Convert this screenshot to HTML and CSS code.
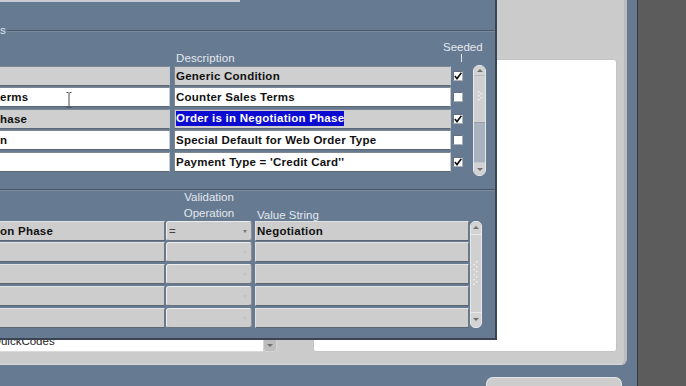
FILE: index.html
```html
<!DOCTYPE html>
<html>
<head>
<meta charset="utf-8">
<link rel="stylesheet" href="styles.css">
</head>
<body>
<div class="desk">
  <div class="bgwin">
    <div class="qc-field">QuickCodes</div>
    <div class="qc-btn"><span class="tri-dn"></span></div>
    <div class="pane"></div>
  </div>
  <div class="darkside"></div>
  <div class="btn-bottom"></div>

  <div class="dialog">
    <div class="topfield"></div>
    <div class="frame-title"><span class="ft-label">s</span><span class="ft-line"></span></div>

    <div class="up-head">
      <div class="hd hd-desc">Description</div>
      <div class="hd hd-seeded"><span>Seeded</span><i class="tick"></i></div>
    </div>

    <div class="up-rows">
      <div class="sb sb-up">
        <div class="sb-a sb-a-top"><span class="tri-up"></span></div>
        <div class="sb-thumb">
          <svg width="6" height="10" viewBox="0 0 6 10"><g fill="#f4f4f4"><rect x="1" y="0" width="1.4" height="1.4"/><rect x="3.6" y="2" width="1.4" height="1.4"/><rect x="1" y="4" width="1.4" height="1.4"/><rect x="3.6" y="6" width="1.4" height="1.4"/><rect x="1" y="8" width="1.4" height="1.4"/></g></svg>
        </div>
        <div class="sb-trk"></div>
        <div class="sb-a sb-a-bot"><span class="tri-dn"></span></div>
      </div>

      <div class="fld f-left gray"></div>
      <div class="fld f-desc gray">Generic Condition</div>
      <div class="cb"><svg width="8" height="8" viewBox="0 0 8 8"><polyline points="0.8,4 3,6.6 7.4,0.8" fill="none" stroke="#111" stroke-width="1.6"/></svg></div>

      <div class="fld f-left white">erms</div>
      <div class="fld f-desc white">Counter Sales Terms</div>
      <div class="cb"></div>

      <div class="fld f-left gray">hase</div>
      <div class="fld f-desc gray"><span class="sel">Order is in Negotiation Phase</span></div>
      <div class="cb"><svg width="8" height="8" viewBox="0 0 8 8"><polyline points="0.8,4 3,6.6 7.4,0.8" fill="none" stroke="#111" stroke-width="1.6"/></svg></div>

      <div class="fld f-left white">n</div>
      <div class="fld f-desc white">Special Default for Web Order Type</div>
      <div class="cb"></div>

      <div class="fld f-left white"></div>
      <div class="fld f-desc white">Payment Type = 'Credit Card''</div>
      <div class="cb"><svg width="8" height="8" viewBox="0 0 8 8"><polyline points="0.8,4 3,6.6 7.4,0.8" fill="none" stroke="#111" stroke-width="1.6"/></svg></div>
    </div>

    <div class="sep"></div>

    <div class="low-head">
      <div class="hd hd-op">Validation<br>Operation</div>
      <div class="hd hd-val">Value String</div>
    </div>

    <div class="low-rows">
      <div class="sb sb-low">
        <div class="sb-a sb-a-top2"><span class="tri-up"></span></div>
        <div class="sb-thumb2">
          <svg width="8" height="24" viewBox="0 0 8 24"><g fill="#f2f2f2"><rect x="4" y="0" width="1.4" height="1.4"/><rect x="1.5" y="3" width="1.4" height="1.4"/><rect x="4" y="5" width="1.4" height="1.4"/><rect x="1.5" y="8" width="1.4" height="1.4"/><rect x="4" y="10" width="1.4" height="1.4"/><rect x="1.5" y="13" width="1.4" height="1.4"/><rect x="4" y="15" width="1.4" height="1.4"/><rect x="1.5" y="18" width="1.4" height="1.4"/><rect x="4" y="20" width="1.4" height="1.4"/><rect x="1.5" y="22.5" width="1.4" height="1.4"/></g></svg>
        </div>
        <div class="sb-a sb-a-bot2"><span class="tri-dn"></span></div>
      </div>

      <div class="fld lf l-left">on Phase</div>
      <div class="fld lf l-op"><span class="eq">=</span><span class="op-arrow dark"></span></div>
      <div class="fld lf l-val">Negotiation</div>

      <div class="fld lf l-left"></div>
      <div class="fld lf l-op"><span class="op-arrow"></span></div>
      <div class="fld lf l-val"></div>

      <div class="fld lf l-left"></div>
      <div class="fld lf l-op"><span class="op-arrow"></span></div>
      <div class="fld lf l-val"></div>

      <div class="fld lf l-left"></div>
      <div class="fld lf l-op"><span class="op-arrow"></span></div>
      <div class="fld lf l-val"></div>

      <div class="fld lf l-left"></div>
      <div class="fld lf l-op"><span class="op-arrow"></span></div>
      <div class="fld lf l-val"></div>
    </div>

    <svg class="ibeam" width="6" height="16" viewBox="0 0 6 16"><path d="M0.5 0.5H2.5M3.5 0.5H5.5M3 1V15M0.5 15.5H2.5M3.5 15.5H5.5" fill="none" stroke="#4a4a4a" stroke-width="1"/></svg>
  </div>
</div>
</body>
</html>
```

FILE: styles.css
```css
html, body {
  margin: 0;
  padding: 0;
}
body {
  width: 686px;
  height: 386px;
  overflow: hidden;
  background: #667a92;
  font-family: "Liberation Sans", Arial, sans-serif;
}
.desk {
  position: relative;
  width: 686px;
  height: 386px;
  overflow: hidden;
}

/* background form window */
.bgwin {
  position: absolute;
  left: -12px;
  top: 0;
  width: 639px;
  height: 365px;
  box-sizing: border-box;
  padding: 60px 0 12px 0;
  display: flex;
  align-items: flex-end;
  background: #cbcbcb;
  border-right: 3px solid #bcbcbc;
  border-bottom: 1px solid #d6d6d6;
  border-bottom-right-radius: 6px;
}
.qc-field {
  width: 275px;
  height: 18px;
  box-sizing: border-box;
  padding-left: 4px;
  background: #fff;
  border-bottom: 1px solid #d9d9d9;
  font-size: 11.5px;
  line-height: 14px;
  color: #222;
}
.qc-btn {
  width: 14px;
  height: 13px;
  box-sizing: border-box;
  background: #bdbdbd;
  border: 1px solid #d4d4d4;
  border-top: 0;
  border-radius: 0 0 4px 4px;
  display: flex;
  align-items: center;
  justify-content: center;
}
.pane {
  width: 304px;
  height: 293px;
  margin-left: 36px;
  box-sizing: border-box;
  background: #fff;
  border: 1px solid #c4c4c4;
  border-radius: 3px;
}
.darkside {
  position: absolute;
  left: 637px;
  top: 0;
  width: 49px;
  height: 386px;
  box-sizing: border-box;
  background: #5c5c5c;
  border-left: 1px solid #3b3b3b;
}
.btn-bottom {
  position: absolute;
  left: 486px;
  top: 377px;
  width: 136px;
  height: 14px;
  box-sizing: border-box;
  background: #cdcdcd;
  border: 1px solid #e4e4e4;
  border-bottom: 0;
  border-radius: 7px 7px 0 0;
}

/* dialog window */
.dialog {
  position: absolute;
  left: 0;
  top: 0;
  width: 497px;
  height: 340px;
  box-sizing: border-box;
  background: #667a92;
  border-right: 2px solid #3a4452;
  border-bottom: 2px solid #3a4452;
  overflow: hidden;
}
.topfield {
  width: 240px;
  height: 2px;
  background: #c7cbd1;
}
.frame-title {
  display: flex;
  align-items: center;
  height: 13px;
  margin-top: 22px;
  font-size: 11.5px;
  line-height: 13px;
  color: #dfe5ec;
}
.ft-label {
  padding-right: 1.5px;
}
.ft-line {
  flex: 1;
  height: 1px;
  background: #46546778;
  background: #4a586b;
  box-shadow: 0 1px 0 #7a8a9e;
}

.hd {
  color: #e3e8ee;
  font-size: 11.5px;
  line-height: 13px;
  white-space: nowrap;
}

/* upper block */
.up-head {
  display: grid;
  grid-template-columns: 177px 279px 20px 13px;
  height: 27.6px;
  margin-left: -3px;
}
.hd-desc {
  grid-column: 2;
  align-self: end;
  padding-left: 2px;
  letter-spacing: 0.1px;
}
.hd-seeded {
  grid-column: 3;
  align-self: end;
  display: flex;
  flex-direction: column;
  margin-left: -10px;
  margin-bottom: 2.4px;
}
.tick {
  display: block;
  width: 1px;
  height: 8px;
  margin-left: 18px;
  background: #e3e8ee;
}
.up-rows {
  display: grid;
  grid-template-columns: 177px 279px 20px 13px;
  grid-auto-rows: 20px;
  row-gap: 1.4px;
  margin: 1.4px 0 0 -3px;
}
.fld {
  box-sizing: border-box;
  height: 20px;
  border: 1px solid;
  border-color: #7f8792 #c6cad0 #5c6570 #7f8792;
  padding-left: 1px;
  font-weight: bold;
  font-size: 11.5px;
  line-height: 18px;
  letter-spacing: 0.25px;
  white-space: nowrap;
  overflow: hidden;
  color: #111;
}
.gray { background: #cfcfcf; }
.white { background: #fff; }
.f-left { width: 173px; padding-left: 2px; }
.f-desc { width: 277px; }
.sel {
  display: inline-block;
  line-height: 15px;
  vertical-align: 1px;
  background: #0b0bd2;
  color: #fff;
}
.cb {
  width: 10px;
  height: 10px;
  align-self: center;
  box-sizing: border-box;
  background: #fff;
  border: 1px solid #66707c;
  border-right-color: #aab0b8;
  border-bottom-color: #aab0b8;
  display: flex;
  align-items: center;
  justify-content: center;
}

/* scrollbars */
.sb {
  grid-column: 4;
  grid-row: 1 / 6;
  box-sizing: border-box;
  border: 1px solid #e6e9ed;
  display: flex;
  flex-direction: column;
  overflow: hidden;
}
.sb-up {
  margin: -1.3px 0 -4.1px 0;
  border-radius: 6px;
  background: #a9b2be;
}
.sb-a {
  display: flex;
  align-items: center;
  justify-content: center;
  background: #d3d3d3;
}
.sb-a-top { height: 9px; border-bottom: 1px solid #b9b9b9; }
.sb-thumb {
  height: 47px;
  background: #d0d0d0;
  border-bottom: 1px solid #9aa0a8;
  display: flex;
  align-items: center;
  justify-content: center;
  padding-bottom: 6px;
  box-sizing: border-box;
}
.sb-trk { flex: 1; }
.sb-a-bot { height: 13px; border-top: 1px solid #c4c8cd; padding-top: 2px; box-sizing: border-box; }
.sb-low {
  margin-bottom: -0.3px;
  border-radius: 5px;
  background: #d0d0d0;
}
.sb-a-top2 { height: 12px; border-bottom: 1px solid #e8e8e8; }
.sb-thumb2 {
  flex: 1;
  display: flex;
  align-items: center;
  justify-content: center;
}
.sb-a-bot2 { height: 14px; border-top: 1px solid #e8e8e8; }
.tri-up {
  width: 0;
  height: 0;
  border-left: 3px solid transparent;
  border-right: 3px solid transparent;
  border-bottom: 3px solid #707070;
}
.tri-dn {
  width: 0;
  height: 0;
  border-left: 3px solid transparent;
  border-right: 3px solid transparent;
  border-top: 3px solid #707070;
}

.sep {
  margin-top: 17.4px;
  height: 0;
  border-top: 1px solid #48566a;
  border-bottom: 1px solid #7d8da2;
}

/* lower block */
.low-head {
  display: grid;
  grid-template-columns: 169px 89px 215px 12px;
  height: 28px;
  margin-left: -3px;
}
.hd-op {
  grid-column: 2;
  width: 86px;
  text-align: center;
  line-height: 16px;
  margin-top: -2px;
  align-self: start;
}
.hd-val {
  grid-column: 3;
  align-self: end;
  padding-left: 2px;
  margin-bottom: -1px;
}
.low-rows {
  display: grid;
  grid-template-columns: 169px 89px 215px 12px;
  grid-auto-rows: 20px;
  row-gap: 1.75px;
  margin: 1.7px 0 0 -3px;
}
.lf {
  background: #cdcdcd;
  border-color: #e2e2e2 #6f7680 #5c6470 #e2e2e2;
}
.l-left { width: 168px; padding-left: 2px; }
.l-op {
  width: 86px;
  position: relative;
  border-radius: 3px;
  border-color: #eeeeee #8c9198 #6c737c #eeeeee;
  padding-left: 2px;
}
.l-val { width: 214px; }
.eq {
  font-weight: normal;
  color: #444;
}
.op-arrow {
  position: absolute;
  right: 4px;
  top: 8px;
  width: 0;
  height: 0;
  border-left: 2.5px solid transparent;
  border-right: 2.5px solid transparent;
  border-top: 3px solid #c2c2c2;
}
.op-arrow.dark {
  border-top-color: #777;
}

.ibeam {
  position: absolute;
  left: 66px;
  top: 92px;
}
```
